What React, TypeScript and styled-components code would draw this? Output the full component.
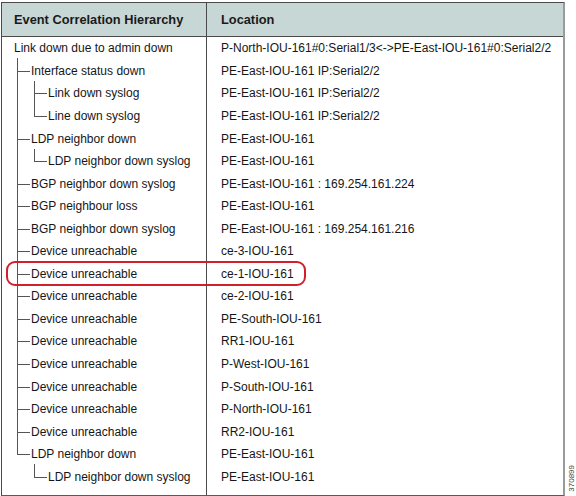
import React, { FC } from 'react';
import styled, { createGlobalStyle, css } from 'styled-components';

const GlobalStyle = createGlobalStyle`
  html, body {
    margin: 0;
    padding: 0;
    background: #ffffff;
  }
  body {
    font-family: "Liberation Sans", Arial, sans-serif;
    color: #161616;
  }
`;

type Guide = 'pipe' | 'blank' | 'tee' | 'elbow';

interface EventRow {
  label: string;
  location: string;
  guides: Guide[];
  parent?: boolean;
  highlight?: boolean;
}

const rows: EventRow[] = [
  { label: 'Link down due to admin down', location: 'P-North-IOU-161#0:Serial1/3<->PE-East-IOU-161#0:Serial2/2', guides: [], parent: true },
  { label: 'Interface status down', location: 'PE-East-IOU-161 IP:Serial2/2', guides: ['tee'], parent: true },
  { label: 'Link down syslog', location: 'PE-East-IOU-161 IP:Serial2/2', guides: ['pipe', 'tee'] },
  { label: 'Line down syslog', location: 'PE-East-IOU-161 IP:Serial2/2', guides: ['pipe', 'elbow'] },
  { label: 'LDP neighbor down', location: 'PE-East-IOU-161', guides: ['tee'], parent: true },
  { label: 'LDP neighbor down syslog', location: 'PE-East-IOU-161', guides: ['pipe', 'elbow'] },
  { label: 'BGP neighbor down syslog', location: 'PE-East-IOU-161 : 169.254.161.224', guides: ['tee'] },
  { label: 'BGP neighbour loss', location: 'PE-East-IOU-161', guides: ['tee'] },
  { label: 'BGP neighbor down syslog', location: 'PE-East-IOU-161 : 169.254.161.216', guides: ['tee'] },
  { label: 'Device unreachable', location: 'ce-3-IOU-161', guides: ['tee'] },
  { label: 'Device unreachable', location: 'ce-1-IOU-161', guides: ['tee'], highlight: true },
  { label: 'Device unreachable', location: 'ce-2-IOU-161', guides: ['tee'] },
  { label: 'Device unreachable', location: 'PE-South-IOU-161', guides: ['tee'] },
  { label: 'Device unreachable', location: 'RR1-IOU-161', guides: ['tee'] },
  { label: 'Device unreachable', location: 'P-West-IOU-161', guides: ['tee'] },
  { label: 'Device unreachable', location: 'P-South-IOU-161', guides: ['tee'] },
  { label: 'Device unreachable', location: 'P-North-IOU-161', guides: ['tee'] },
  { label: 'Device unreachable', location: 'RR2-IOU-161', guides: ['tee'] },
  { label: 'LDP neighbor down', location: 'PE-East-IOU-161', guides: ['elbow'], parent: true },
  { label: 'LDP neighbor down syslog', location: 'PE-East-IOU-161', guides: ['blank', 'elbow'] },
];

const lineColour = '#555555';

const Page = styled.div`
  display: flex;
  align-items: flex-end;
  padding-left: 1px;
  width: 576px;
  height: 496px;
  box-sizing: border-box;
`;

const Table = styled.div`
  width: 564px;
  box-sizing: border-box;
  border-top: 1px solid #4a4a4a;
  border-left: 1px solid #4a4a4a;
  border-bottom: 1px solid #5a5a5a;
  border-right: 2px solid #9a9a9a;
  display: flex;
  flex-direction: column;
`;

const Columns = css`
  display: grid;
  grid-template-columns: 205px 1fr;
`;

const Header = styled.div`
  ${Columns};
  height: 34px;
  box-sizing: border-box;
  background: #c7d7d6;
  border-bottom: 1px solid #4a4a4a;
  font-weight: bold;
  font-size: 12.8px;
  color: #1a1a1a;
`;

const HeadCell = styled.div<{ $divider?: boolean }>`
  display: flex;
  align-items: center;
  padding-left: ${p => (p.$divider ? '12px' : '14px')};
  border-right: ${p => (p.$divider ? `1px solid #4a4a4a` : 'none')};
`;

const Row = styled.div`
  ${Columns};
  position: relative;
  height: 22.55px;
  font-size: 12px;
`;

const TreeCell = styled.div`
  display: flex;
  align-items: stretch;
  padding-left: 12px;
  border-right: 1px solid #4a4a4a;
`;

const LocationCell = styled.div`
  display: flex;
  align-items: center;
  padding-left: 14px;
  white-space: nowrap;
`;

const GuideBox = styled.span<{ $kind: Guide }>`
  position: relative;
  width: 17px;
  flex: none;

  &::before {
    content: '';
    position: absolute;
    left: 3px;
    width: 1px;
    top: 0;
    background: ${lineColour};
    display: ${p => (p.$kind === 'blank' ? 'none' : 'block')};
    bottom: ${p => (p.$kind === 'elbow' ? '50%' : '0')};
  }

  &::after {
    content: '';
    position: absolute;
    left: 3px;
    width: 13px;
    top: 50%;
    height: 1px;
    background: ${lineColour};
    display: ${p => (p.$kind === 'tee' || p.$kind === 'elbow' ? 'block' : 'none')};
  }
`;

const Label = styled.span<{ $parent?: boolean }>`
  position: relative;
  display: flex;
  align-items: center;
  white-space: nowrap;

  &::after {
    content: '';
    position: absolute;
    left: 3px;
    width: 1px;
    top: calc(50% + 10px);
    bottom: 0;
    background: ${lineColour};
    display: ${p => (p.$parent ? 'block' : 'none')};
  }
`;

const Filler = styled.div`
  ${Columns};
  height: 7px;
`;

const Highlight = styled.div`
  position: absolute;
  left: 4px;
  top: -2px;
  bottom: -1px;
  width: 300px;
  box-sizing: border-box;
  border: 2px solid #d0202b;
  border-radius: 9px;
  pointer-events: none;
`;

const Stamp = styled.div`
  writing-mode: vertical-rl;
  transform: rotate(180deg);
  font-size: 8px;
  color: #444;
  margin-left: 2px;
  margin-bottom: 4px;
`;

const App: FC = () => {
  return (
    <Page>
      <GlobalStyle />
      <Table>
        <Header>
          <HeadCell $divider>Event Correlation Hierarchy</HeadCell>
          <HeadCell>Location</HeadCell>
        </Header>
        {rows.map((row, i) => (
          <Row key={i}>
            <TreeCell>
              {row.guides.map((g, j) => (
                <GuideBox key={j} $kind={g} />
              ))}
              <Label $parent={row.parent}>{row.label}</Label>
            </TreeCell>
            <LocationCell>{row.location}</LocationCell>
            {row.highlight && <Highlight />}
          </Row>
        ))}
        <Filler>
          <TreeCell />
          <div />
        </Filler>
      </Table>
      <Stamp>370899</Stamp>
    </Page>
  );
};

export default App;
